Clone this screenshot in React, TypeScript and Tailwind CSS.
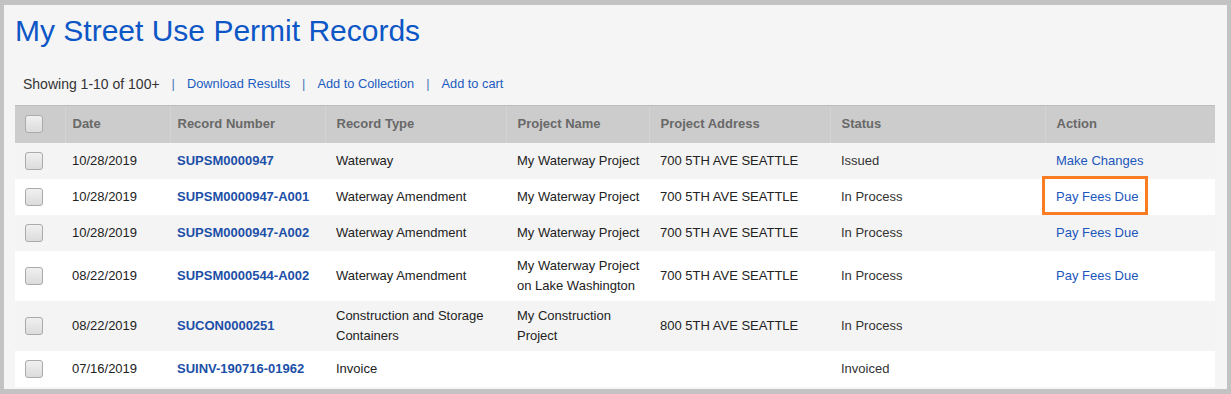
import React from "react";

const F = { fontFamily: '"Liberation Sans", Arial, sans-serif' };

function Box() {
  return (
    <div className="w-[18px] h-[18px] rounded-[3px] border border-[#aaaaaa] bg-gradient-to-b from-[#f0f0f0] to-[#dcdcdc]" />
  );
}

type Row = {
  date: string;
  num: string;
  type: string;
  name: string;
  addr: string;
  status: string;
  action: string;
  bg: string;
  box?: boolean;
};

const rows: Row[] = [
  { date: "10/28/2019", num: "SUPSM0000947", type: "Waterway", name: "My Waterway Project", addr: "700 5TH AVE SEATTLE", status: "Issued", action: "Make Changes", bg: "bg-[#f4f4f4]" },
  { date: "10/28/2019", num: "SUPSM0000947-A001", type: "Waterway Amendment", name: "My Waterway Project", addr: "700 5TH AVE SEATTLE", status: "In Process", action: "Pay Fees Due", bg: "bg-white", box: true },
  { date: "10/28/2019", num: "SUPSM0000947-A002", type: "Waterway Amendment", name: "My Waterway Project", addr: "700 5TH AVE SEATTLE", status: "In Process", action: "Pay Fees Due", bg: "bg-[#f4f4f4]" },
  { date: "08/22/2019", num: "SUPSM0000544-A002", type: "Waterway Amendment", name: "My Waterway Project on Lake Washington", addr: "700 5TH AVE SEATTLE", status: "In Process", action: "Pay Fees Due", bg: "bg-white" },
  { date: "08/22/2019", num: "SUCON0000251", type: "Construction and Storage Containers", name: "My Construction Project", addr: "800 5TH AVE SEATTLE", status: "In Process", action: "", bg: "bg-[#f4f4f4]" },
  { date: "07/16/2019", num: "SUINV-190716-01962", type: "Invoice", name: "", addr: "", status: "Invoiced", action: "", bg: "bg-white" },
];

const widths = [50, 105, 155, 181, 143, 181, 215, 170];

export default function App() {
  return (
    <div style={F} className="w-[1231px] h-[394px] border-x-4 border-y-[5px] border-[#c3c3c3] bg-[#f5f5f5] overflow-hidden">
      <div className="pl-[11px] pr-[12px]">
        <h1 className="mt-[8px] text-[30px] leading-[36px] text-[#0d56c6] font-normal">
          My Street Use Permit Records
        </h1>
        <div className="mt-[25px] flex items-center h-[20px] pl-[8px] text-[12.8px] leading-[20px]">
          <span className="text-[14px] text-[#333333]">Showing 1-10 of 100+</span>
          <span className="mx-[12px] text-[#4a78b8]">|</span>
          <span className="text-[#1b5cc0]">Download Results</span>
          <span className="mx-[12px] text-[#4a78b8]">|</span>
          <span className="text-[#1b5cc0]">Add to Collection</span>
          <span className="mx-[12px] text-[#4a78b8]">|</span>
          <span className="text-[#1b5cc0]">Add to cart</span>
        </div>
        <table className="mt-[11px] w-[1200px] table-fixed border-collapse text-[13px] leading-[20px]">
          <colgroup>
            {widths.map((w, i) => (
              <col key={i} style={{ width: w }} />
            ))}
          </colgroup>
          <thead>
            <tr className="h-[37px] bg-[#cccccc] text-left text-[#686868] font-bold">
              <th className="pl-[10px] border-t border-[#bdbdbd]"><Box /></th>
              <th className="pl-[7px] border-t border-l border-l-[#d4d4d4] border-t-[#bdbdbd]">Date</th>
              <th className="pl-[7px] border-t border-l border-l-[#d4d4d4] border-t-[#bdbdbd]">Record Number</th>
              <th className="pl-[11px] border-t border-l border-l-[#d4d4d4] border-t-[#bdbdbd]">Record Type</th>
              <th className="pl-[11px] border-t border-l border-l-[#d4d4d4] border-t-[#bdbdbd]">Project Name</th>
              <th className="pl-[11px] border-t border-l border-l-[#d4d4d4] border-t-[#bdbdbd]">Project Address</th>
              <th className="pl-[11px] border-t border-l border-l-[#d4d4d4] border-t-[#bdbdbd]">Status</th>
              <th className="pl-[11px] border-t border-l border-l-[#d4d4d4] border-t-[#bdbdbd]">Action</th>
            </tr>
          </thead>
          <tbody>
            {rows.map((r, i) => (
              <tr key={i} className={`h-[36px] ${r.bg} text-[#222222]`}>
                <td className="pl-[10px] py-[5px] align-middle"><Box /></td>
                <td className="pl-[7px] py-[5px]">{r.date}</td>
                <td className="pl-[7px] py-[5px] font-bold text-[#1c4fa8]">{r.num}</td>
                <td className="pl-[11px] pr-[8px] py-[5px]">{r.type}</td>
                <td className="pl-[11px] pr-[8px] py-[5px]">{r.name}</td>
                <td className="pl-[11px] py-[5px]">{r.addr}</td>
                <td className="pl-[11px] py-[5px] text-[#333333]">{r.status}</td>
                <td className="pl-[11px] py-[5px] relative text-[#1b56bc]">
                  {r.action}
                  {r.box && (
                    <div className="absolute left-[-3px] top-[-3px] w-[106px] h-[39px] border-[3px] border-[#fb7d23]" />
                  )}
                </td>
              </tr>
            ))}
          </tbody>
        </table>
      </div>
    </div>
  );
}
